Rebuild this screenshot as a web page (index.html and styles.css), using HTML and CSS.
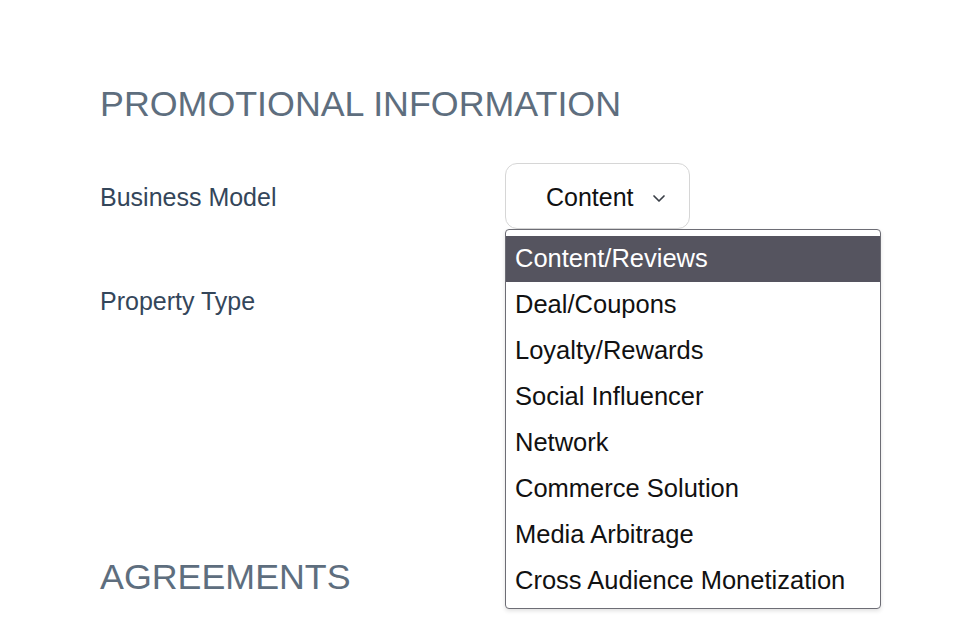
FILE: index.html
```html
<!DOCTYPE html>
<html>
<head>
<meta charset="utf-8">
<link rel="stylesheet" href="styles.css">
</head>
<body>
<main class="page">
  <h2 class="section-title">PROMOTIONAL INFORMATION</h2>
  <div class="form-row">
    <label class="field-label">Business Model</label>
    <div class="select-wrap">
      <button class="select-btn">
        <span class="select-value">Content</span>
        <svg class="chev" width="14" height="9" viewBox="0 0 14 9"><path d="M2 2 L7 7 L12 2" fill="none" stroke="#3a3f47" stroke-width="1.7" stroke-linecap="round" stroke-linejoin="round"/></svg>
      </button>
      <ul class="dropdown">
        <li class="opt active">Content/Reviews</li>
        <li class="opt">Deal/Coupons</li>
        <li class="opt">Loyalty/Rewards</li>
        <li class="opt">Social Influencer</li>
        <li class="opt">Network</li>
        <li class="opt">Commerce Solution</li>
        <li class="opt">Media Arbitrage</li>
        <li class="opt">Cross Audience Monetization</li>
      </ul>
    </div>
  </div>
  <div class="form-row">
    <label class="field-label">Property Type</label>
  </div>
  <h2 class="section-title agreements">AGREEMENTS</h2>
</main>
</body>
</html>
```

FILE: styles.css
```css
html, body {
  margin: 0;
  padding: 0;
  background: #ffffff;
}
body {
  font-family: "Liberation Sans", Arial, sans-serif;
  min-height: 631px;
}
.page {
  padding: 84px 0 40px 100px;
}
.section-title {
  margin: 0;
  font-weight: 400;
  font-size: 35.8px;
  line-height: 40px;
  color: #5e6e7e;
  letter-spacing: 0;
}
.form-row {
  display: flex;
  align-items: center;
  height: 66px;
}
.form-row:first-of-type {
  margin-top: 39px;
}
.form-row + .form-row {
  margin-top: 38px;
}
.field-label {
  width: 405px;
  padding-top: 3px;
  font-size: 25px;
  color: #34465a;
}
.select-wrap {
  position: relative;
}
.select-btn {
  display: flex;
  align-items: center;
  gap: 18px;
  box-sizing: border-box;
  width: 185px;
  height: 66px;
  padding: 2px 20px 0 40px;
  background: #fff;
  border: 1px solid #d6d6d6;
  border-radius: 12px;
  font-family: inherit;
  font-size: 25px;
  color: #111;
}
.chev {
  margin-top: 3px;
}
.dropdown {
  position: absolute;
  top: 66px;
  left: 0;
  width: 376px;
  box-sizing: border-box;
  margin: 0;
  padding: 6px 0 4px;
  list-style: none;
  background: #fff;
  border: 1px solid #6d6d75;
  border-radius: 4px;
  box-shadow: 0 2px 4px rgba(0,0,0,0.12);
}
.opt {
  height: 46px;
  line-height: 44px;
  padding-left: 9px;
  font-size: 25.5px;
  color: #111;
  white-space: nowrap;
}
.opt.active {
  background: #55545f;
  color: #fff;
}
.agreements {
  margin-top: 224px;
}
```
